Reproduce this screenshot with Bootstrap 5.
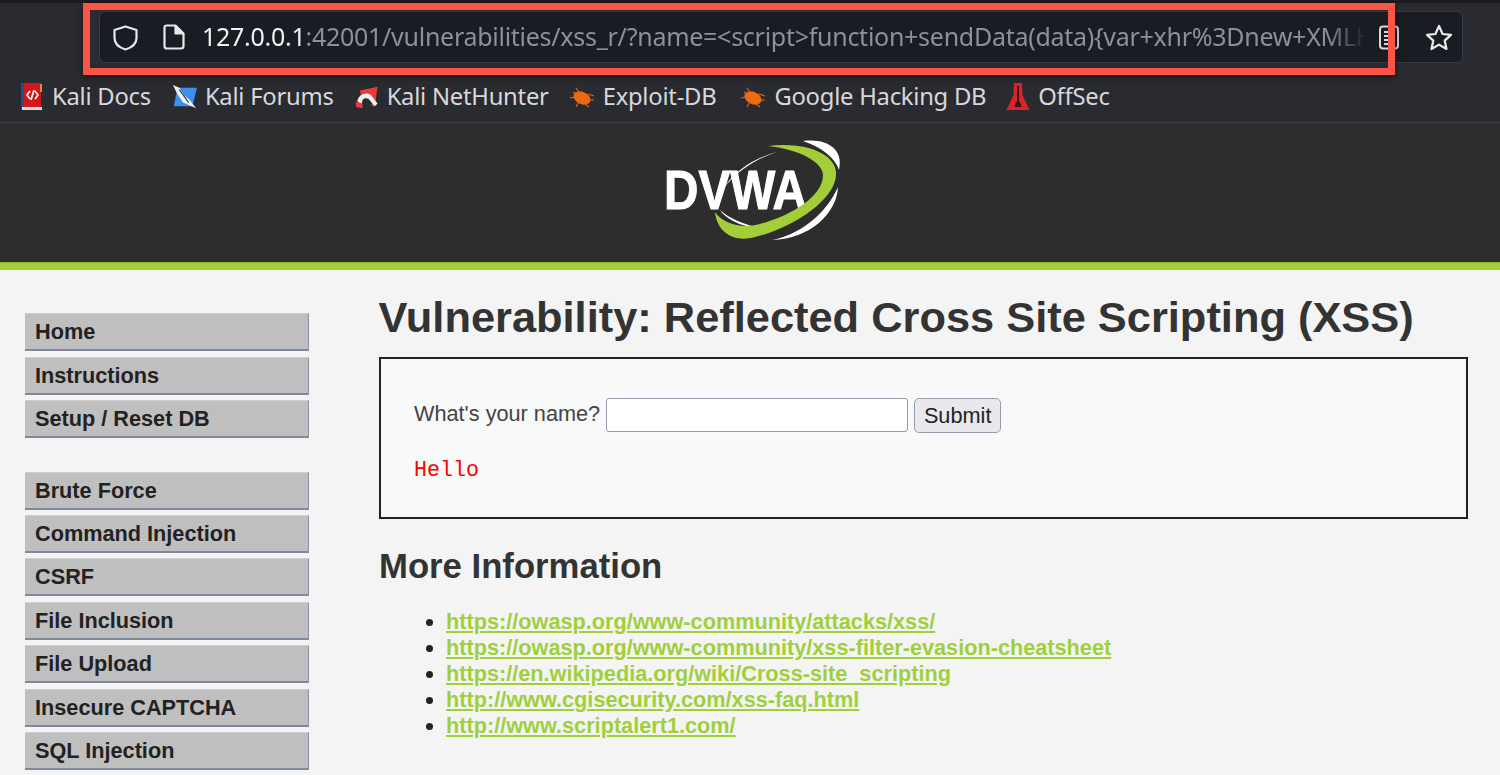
<!doctype html>
<html lang="en">
<head>
<meta charset="utf-8">
<title>DVWA</title>
<link href="https://cdn.jsdelivr.net/npm/bootstrap@5.3.0/dist/css/bootstrap.min.css" rel="stylesheet">
<style>
html,body{height:775px;overflow:hidden}
body{background:#f4f4f4;font-family:"Liberation Sans",Arial,sans-serif;color:#333;position:relative}
.topchrome{background:#2a2b30;font-family:"Noto Sans",sans-serif;height:123px;border-bottom:1px solid #3c3d42}
.toolrow{height:75px;padding:11px 37px 0 99px;border-top:3px solid #1c1c20}
.urlbar{height:52px;margin-top:-3px;background:#1a1c24;border:1px solid #3a3b42;border-radius:6px;padding:0 9px 0 12px;color:#e4e4e8}
.urltext{font-size:25px;white-space:nowrap;width:1165px;margin-left:17px;color:#8f8f96;letter-spacing:-.27px;flex:none;-webkit-mask-image:linear-gradient(90deg,#000 96.500%,transparent);mask-image:linear-gradient(90deg,#000 96.500%,transparent)}
.urlhost{color:#f2f2f4}
.readericon{margin-left:12px}
.bookrow{height:47px;padding:0 0 4px 20px;color:#d8d8dc;font-size:23.8px;gap:20px;letter-spacing:-.25px}
.bookitem{gap:8px;white-space:nowrap}
.redframe{position:absolute;left:83px;top:3px;width:1312px;height:72px;border:7px solid #fb5547;box-shadow:0 2px 6px rgba(0,0,0,.55);pointer-events:none}
.dvhead{background:#2d2d2d;height:139px;padding-top:2px}
.dvline{height:8px;background:#a3cd39;border-top:1px solid #8fb52e}
.sidebar{width:284px;margin-left:25px;padding-top:43.300px;flex:none}
.menugroup{margin-bottom:33.600px;display:flex;flex-direction:column;gap:5.400px}
.menuitem{height:38px;background:#bfbfbf;border-top:1px solid #cfcfcf;border-right:1px solid #8a94a8;border-bottom:2px solid #7f899d;color:#222;font-weight:700;font-size:21.700px;line-height:35px;padding-left:10px}
.mainpane{margin-left:70px;width:1089px;flex:none;padding-top:22px}
.pagetitle{font-size:43.400px;font-weight:700;line-height:50px;margin:0 0 15px -.5px;color:#333;white-space:nowrap}
.vulnbox{height:162px;background:#f8f9f9;border:2px solid #222;padding:38px 0 0 33px}
.fieldlabel{font-size:21.700px;color:#444;line-height:30px;margin:-2px 6px 0 0}
.nameinput{width:302px;height:34px;background:#fff;border:1.500px solid #9a9aac;border-radius:3px;margin-right:6px}
.submitbtn{width:87px;height:35px;margin-top:1px;background:#e9e9ed;border:1.500px solid #9a9aac;border-radius:5px;font-size:21.700px;color:#222;padding:0;line-height:30px}
.hellotext{font-family:"Liberation Mono",monospace;font-size:21.700px;color:#f00;line-height:26px;margin:25px 0 0}
.moretitle{font-size:34.700px;font-weight:700;line-height:38px;margin:28px 0 24px;color:#333}
.linklist{margin:0;padding-left:67px;font-size:21.700px;line-height:26px}
.linklist a{color:#9fd03c;font-weight:700;text-decoration:underline}
.linklist li::marker{color:#222}
</style>
</head>
<body>
<div class="topchrome">
  <div class="toolrow">
    <div class="urlbar d-flex align-items-center">
      <svg width="27" height="27" viewBox="0 0 27 27" fill="none" stroke="#e8e8ea" stroke-width="2.200" stroke-linejoin="round"><path d="M13.500 2.500 24.500 6v8c0 6-4.500 9.500-11 11.500C7 23.500 2.500 20 2.500 14V6z"/></svg>
      <svg class="ms-4" width="22" height="26" viewBox="0 0 22 26" fill="none" stroke="#e8e8ea" stroke-width="2.200" stroke-linejoin="round"><path d="M3.500 1.500h9l8 8v12.500a2.500 2.500 0 0 1-2.500 2.500h-14.500a2.500 2.500 0 0 1-2-2.500V3.500a2 2 0 0 1 2-2z"/><path d="M12.500 1.500v8h8" fill="#e8e8ea"/></svg>
      <div class="urltext"><span class="urlhost">127.0.0.1</span>:42001/vulnerabilities/xss_r/?name=&lt;script&gt;function+sendData(data){var+xhr%3Dnew+XMLH</div>
      <svg class="readericon" width="20" height="25" viewBox="0 0 20 25" fill="none" stroke="#d8d8dc" stroke-width="2"><rect x="1" y="1.500" width="18" height="22" rx="3"/><path d="M5 7h7M5 11h7M5 15h7M5 19h5"/></svg>
      <svg class="ms-auto" width="28" height="27" viewBox="0 0 28 27" fill="none" stroke="#ececee" stroke-width="2.200" stroke-linejoin="round"><path d="M14 2l3.600 8 8.400 .9-6.300 5.700 1.800 8.400-7.500-4.400-7.500 4.400 1.800-8.400L2 10.900l8.400-.9z"/></svg>
    </div>
  </div>
  <div class="bookrow d-flex align-items-center">
    <div class="bookitem d-flex align-items-center">
      <svg width="24" height="28" viewBox="0 0 22 28"><rect x="0" y="0" width="3" height="26" fill="#2b4a90"/><rect x="3" y="0" width="17" height="24" fill="#d3161b"/><rect x="19" y="1" width="2" height="8" fill="#e08a2a"/><rect x="1" y="24" width="20" height="3" fill="#ddd"/><path d="M9 8 6 12l3 4M14 8l3 4-3 4M13 7l-3 10" stroke="#fff" stroke-width="1.600" fill="none"/></svg>
      <span>Kali Docs</span>
    </div>
    <div class="bookitem d-flex align-items-center">
      <svg width="26" height="26" viewBox="0 0 28 28"><path d="M7 4h21l-5 20H3z" fill="#3d8fee"/><path d="M2 1l7 3 5 8 6 5 7 9-9-4-5-2-6-9z" fill="#f1f1f1"/><path d="M9 6l10 14" stroke="#444" stroke-width="1.300"/></svg>
      <span>Kali Forums</span>
    </div>
    <div class="bookitem d-flex align-items-center">
      <svg width="25" height="24" viewBox="0 0 26 26"><path d="M6 6 25 2l-3 21-4-1 2-5c-2-5-7-8-13-5zM1 19l7-1 1 7-7-1z" fill="#ea3b3b"/><path d="M3 18c1-8 10-11 15-7l7 9-3 3-7-8c-4-2-7 0-7 5z" fill="#eee"/></svg>
      <span>Kali NetHunter</span>
    </div>
    <div class="bookitem d-flex align-items-center me-1">
      <svg width="26" height="24" viewBox="0 0 26 24"><ellipse cx="13" cy="13" rx="9" ry="6" fill="#ee6a12" transform="rotate(25 13 13)"/><path d="M4 7l5 3M7 3l4 6M16 19l4 3M9 18l-2 4M19 9l6 2M19 15l6 0M1 13l5-1" stroke="#e0691a" stroke-width="1.100"/></svg>
      <span>Exploit-DB</span>
    </div>
    <div class="bookitem d-flex align-items-center">
      <svg width="26" height="24" viewBox="0 0 26 24"><ellipse cx="13" cy="13" rx="9" ry="6" fill="#ee6a12" transform="rotate(25 13 13)"/><path d="M4 7l5 3M7 3l4 6M16 19l4 3M9 18l-2 4M19 9l6 2M19 15l6 0M1 13l5-1" stroke="#e0691a" stroke-width="1.100"/></svg>
      <span>Google Hacking DB</span>
    </div>
    <div class="bookitem d-flex align-items-center">
      <svg width="24" height="29" viewBox="0 0 23 29"><path d="M7.500 1h8l.5 12 7 15H0L7 13z" fill="#d8242a"/><path d="M11.500 4v17" stroke="#3a1315" stroke-width="2"/><path d="M9.500 20h4l1.500 5H8z" fill="#3a1315"/></svg>
      <span>OffSec</span>
    </div>
  </div>
</div>
<div class="redframe"></div>
<div class="dvhead d-flex justify-content-center">
  <svg width="260" height="137" viewBox="0 0 260 137" role="img" aria-label="DVWA logo">
    <path d="M183 16C207 13 224 24 219 45 215 33 203 23 183 16z" fill="#fff"/>
    <path d="M218 62C217 88 190 114 152 115 178 110 205 91 218 62z" fill="#fff"/>
    <path d="M157 27C135 33 115 45 103 64 117 46 136 34 157 27zM100 85C106 95 125 103 141 103 125 100 110 94 100 85z" fill="#fff"/>
    <text x="44" y="84" font-family="'Liberation Sans', Arial, sans-serif" font-weight="700" font-size="56" fill="#fff" stroke="#fff" stroke-width="1" textLength="143" lengthAdjust="spacingAndGlyphs">DVWA</text>
    <path d="M148 21C187 16 218 30 216 50 215 76 170 104 135 112 115 118 97 108 95 87 103 99 122 104 140 99 170 91 203 72 203 50 203 37 178 24 148 21z" fill="#a3cd39"/>
  </svg>
</div>
<div class="dvline"></div>
<div class="d-flex">
  <nav class="sidebar">
    <div class="menugroup">
      <div class="menuitem">Home</div>
      <div class="menuitem">Instructions</div>
      <div class="menuitem">Setup / Reset DB</div>
    </div>
    <div class="menugroup">
      <div class="menuitem">Brute Force</div>
      <div class="menuitem">Command Injection</div>
      <div class="menuitem">CSRF</div>
      <div class="menuitem">File Inclusion</div>
      <div class="menuitem">File Upload</div>
      <div class="menuitem">Insecure CAPTCHA</div>
      <div class="menuitem">SQL Injection</div>
    </div>
  </nav>
  <main class="mainpane">
    <h1 class="pagetitle">Vulnerability: Reflected Cross Site Scripting (XSS)</h1>
    <div class="vulnbox">
      <form class="d-flex align-items-center">
        <label class="fieldlabel" for="nm">What's your name?</label>
        <input id="nm" class="nameinput" type="text">
        <button class="submitbtn" type="button">Submit</button>
      </form>
      <pre class="hellotext">Hello</pre>
    </div>
    <h2 class="moretitle">More Information</h2>
    <ul class="linklist">
      <li><a href="#">https://owasp.org/www-community/attacks/xss/</a></li>
      <li><a href="#">https://owasp.org/www-community/xss-filter-evasion-cheatsheet</a></li>
      <li><a href="#">https://en.wikipedia.org/wiki/Cross-site_scripting</a></li>
      <li><a href="#">http://www.cgisecurity.com/xss-faq.html</a></li>
      <li><a href="#">http://www.scriptalert1.com/</a></li>
    </ul>
  </main>
</div>
<script src="https://cdn.jsdelivr.net/npm/bootstrap@5.3.0/dist/js/bootstrap.bundle.min.js"></script>
</body>
</html>
